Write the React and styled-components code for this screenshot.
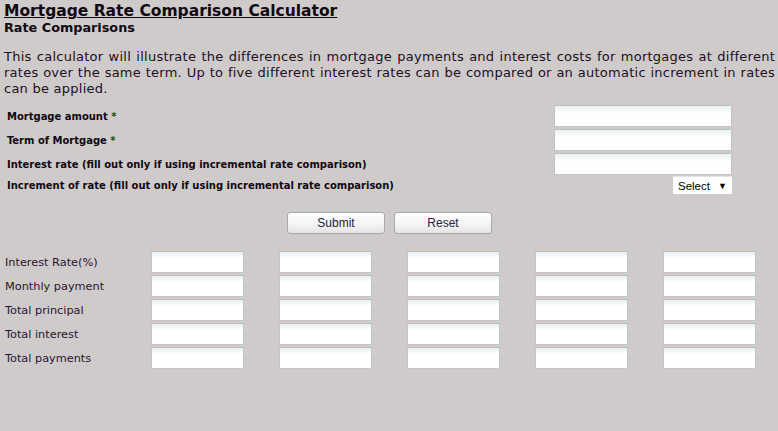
import React from "react";
import styled, { createGlobalStyle } from "styled-components";

const GlobalStyle = createGlobalStyle`
    html, body {
        margin: 0;
        padding: 0;
        background: #cfcbca;
    }
    body {
        font-family: "DejaVu Sans", Verdana, sans-serif;
        color: #1c0f1f;
    }
`;

const Page = styled.div`
    padding: 1px 3px 40px 4px;
`;

const Title = styled.h1`
    margin: 0;
    font-size: 15.5px;
    font-weight: bold;
    line-height: 20px;
    text-decoration: underline;
    color: #100810;
`;

const SubTitle = styled.h2`
    margin: 0;
    font-size: 12.8px;
    font-weight: bold;
    line-height: 14px;
    color: #100810;
`;

const Intro = styled.p`
    margin: 14px 0 8px;
    font-size: 13px;
    line-height: 16px;
    letter-spacing: 0.25px;
    text-align: justify;
`;

const Form = styled.div`
    width: 728px;
    display: flex;
    flex-direction: column;
    gap: 2px;
`;

const FormRow = styled.div`
    display: flex;
    justify-content: space-between;
    align-items: center;
    height: ${(p) => (p.$short ? "18px" : "22px")};
    margin-top: ${(p) => (p.$short ? "-1px" : "0")};
    padding-left: 3px;
`;

const Label = styled.label`
    font-family: "DejaVu Sans Condensed", "DejaVu Sans", sans-serif;
    font-size: 11.1px;
    font-weight: bold;
    color: #100810;
`;

const Req = styled.span`
    color: #0d4d0d;
`;

const TextBox = styled.input`
    box-sizing: border-box;
    width: ${(p) => p.$w || "178px"};
    height: 22px;
    border: 1px solid #c4c4c4;
    border-top-color: #bdbdbd;
    background: linear-gradient(#e9eef1, #ffffff 35%);
    outline: none;
    padding: 0 3px;
`;

const SelectBox = styled.div`
    box-sizing: border-box;
    width: 59px;
    height: 18px;
    background: #fff;
    border-top: 1px solid #e3e3e3;
    display: flex;
    justify-content: space-between;
    align-items: center;
    padding: 0 5px;
    font-family: "Liberation Sans", Arial, sans-serif;
    font-size: 11.5px;
    color: #000;
    span {
        font-size: 9px;
    }
`;

const Buttons = styled.div`
    display: flex;
    justify-content: center;
    gap: 9px;
    margin: 18px 0 17px;
`;

const Button = styled.button`
    width: 98px;
    height: 22px;
    border: 1px solid #a9a9a9;
    border-radius: 3px;
    background: linear-gradient(#ffffff, #f6f6f6 50%, #e4e4e4);
    font-family: "Liberation Sans", Arial, sans-serif;
    font-size: 12px;
    color: #222244;
    padding: 0;
`;

const Results = styled.div`
    display: grid;
    grid-template-columns: 147px repeat(5, 128px);
    row-gap: 2px;
    align-items: center;
`;

const ResultLabel = styled.div`
    font-size: 11.3px;
    padding-left: 1px;
    color: #2a1430;
`;

const rows = [
    "Interest Rate(%)",
    "Monthly payment",
    "Total principal",
    "Total interest",
    "Total payments",
];

const App = () => {
    return (
        <>
            <GlobalStyle />
            <Page>
                <Title>Mortgage Rate Comparison Calculator</Title>
                <SubTitle>Rate Comparisons</SubTitle>
                <Intro>
                    This calculator will illustrate the differences in mortgage
                    payments and interest costs for mortgages at different rates
                    over the same term. Up to five different interest rates can be
                    compared or an automatic increment in rates can be applied.
                </Intro>
                <Form>
                    <FormRow>
                        <Label>
                            Mortgage amount <Req>*</Req>
                        </Label>
                        <TextBox />
                    </FormRow>
                    <FormRow>
                        <Label>
                            Term of Mortgage <Req>*</Req>
                        </Label>
                        <TextBox />
                    </FormRow>
                    <FormRow>
                        <Label>
                            Interest rate (fill out only if using incremental rate
                            comparison)
                        </Label>
                        <TextBox />
                    </FormRow>
                    <FormRow $short>
                        <Label>
                            Increment of rate (fill out only if using incremental
                            rate comparison)
                        </Label>
                        <SelectBox>
                            Select <span>▼</span>
                        </SelectBox>
                    </FormRow>
                </Form>
                <Buttons>
                    <Button>Submit</Button>
                    <Button>Reset</Button>
                </Buttons>
                <Results>
                    {rows.map((r) => (
                        <React.Fragment key={r}>
                            <ResultLabel>{r}</ResultLabel>
                            {[0, 1, 2, 3, 4].map((i) => (
                                <TextBox key={i} $w="93px" />
                            ))}
                        </React.Fragment>
                    ))}
                </Results>
            </Page>
        </>
    );
};

export default App;
